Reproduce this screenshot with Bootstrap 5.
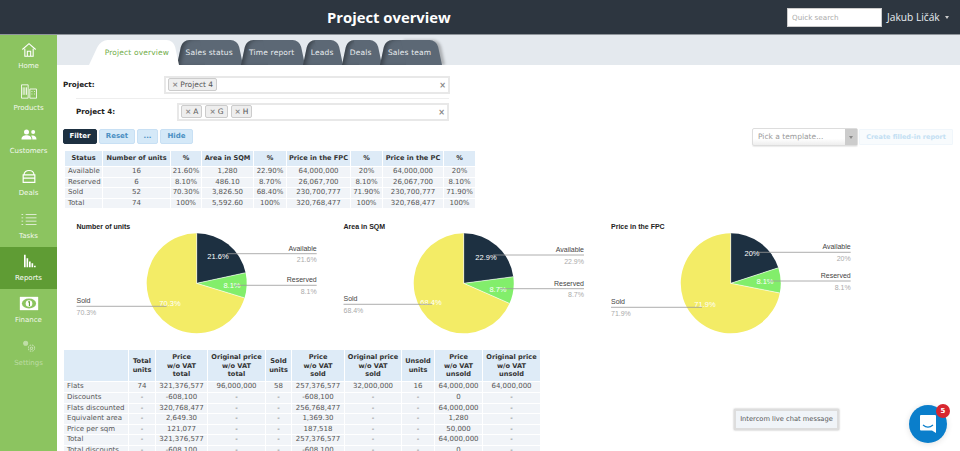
<!DOCTYPE html>
<html lang="en"><head><meta charset="utf-8"><title>Project overview</title>
<link href="https://cdn.jsdelivr.net/npm/bootstrap@5.3.0/dist/css/bootstrap.min.css" rel="stylesheet">
<style>
html,body{height:100%;overflow:hidden}
body{font-family:"DejaVu Sans",sans-serif;font-size:7px;color:#555;background:#fff}
.top-bar{height:35px;background:#2d3640;border-bottom:1px solid #8f959b;position:relative}
.top-title{font:700 14.800px/34px "Open Sans",sans-serif;color:#fff;position:absolute;left:327px;top:0}
.search-box{width:95px;height:19px;border:1px solid #ccc;background:#fff;font:7.200px "DejaVu Sans",sans-serif;padding:0 4px;color:#aaa;line-height:17px}
.user-name{font:10.200px "Open Sans",sans-serif;color:#e8eef2;width:58px;margin-left:5px}
.caret-mark{width:0;height:0;border:2px solid transparent;border-top:3px solid #ccc;border-bottom:0;margin-right:11px}
.side-nav{width:57px;background:#8cc460;flex:none;height:416px}
.side-item{height:42.400px;color:#f3f8ee;font:7px/9px "DejaVu Sans",sans-serif;padding-top:7px}
.side-item svg{height:15px;width:20px;display:block;margin-bottom:5px}
.side-item.on{background:#5f9c34;color:#fff}
.side-item.dim{opacity:.45}
.main-pane{flex:1;min-width:0}
.tab-band{height:30px;background:#e4e9ee;padding-left:39.500px;overflow:hidden}
.tab-shape{height:25px;padding:0 8.200px;font:7.500px/25px "DejaVu Sans",sans-serif;letter-spacing:.15px;color:#e9edf0;position:relative;z-index:1;white-space:nowrap}
.tab-shape::before,.tab-shape::after{content:"";position:absolute;top:0;bottom:0;width:60%;background:#5c6875;z-index:-1}
.tab-shape::before{left:0;transform-origin:bottom;transform:skewX(-12deg);border-top-left-radius:7px;box-shadow:inset 5px 0 4px -2px rgba(0,0,0,.35)}
.tab-shape::after{right:-2px;transform-origin:bottom;transform:skewX(12deg);border-top-right-radius:7px}
.tab-shape:last-child::after{box-shadow:3px 0 3px rgba(0,0,0,.25)}
.tab-shape.on{color:#72ad4a;z-index:2}
.tab-shape.on::before,.tab-shape.on::after{background:#fff;box-shadow:none}
.tab-shape.on::before{left:-8px;transform:skewX(-25deg);width:70%}
.filter-area{padding:11px 6px 0 6px;position:relative}
.field-row{display:flex;align-items:center;height:17px}
.field-name{font-weight:700;color:#222;font-size:7.200px;flex:none;padding-top:1px}
.name-wide{width:101px}
.name-narrow{width:101px;margin-left:13px}
.tag-box{width:286px;height:18px;border:2px solid #e8e8e8;display:flex;align-items:center;gap:3px;padding:0 2px;position:relative;flex:none}
.tag-box.short{width:272px}
.tag-item{border:1px solid #ccc;background:#eee;height:13px;border-radius:2px;line-height:11px;padding:0 3px;color:#555;font-size:7.500px}
.tag-item b{color:#888;font-weight:700;margin-right:2px}
.clear-x{position:absolute;right:2px;top:2px;color:#888;font-weight:700;font-size:8px;line-height:11px}
.row-rule{height:1px;background:#eee;margin:5px 0 4px 13px;width:373px}
.act-row{display:flex;gap:2px;margin-top:9px;height:15px}
.btn.act-btn{font:700 7px/13px "DejaVu Sans",sans-serif;padding:0;height:15px;border-radius:2px;border:1px solid #c8e0f4;background:#d5e9f8;color:#4a8fc2}
.btn.act-btn.dark{background:#1d3041;border-color:#1d3041;color:#fff;width:34px}
.w-reset{width:36px}.w-dots{width:21px}.w-hide{width:33px}
.right-tools{position:absolute;right:7px;top:63px;display:flex;gap:1px}
.tpl-pick{width:106px;height:18px;border:1px solid #ddd;border-radius:2px;background:linear-gradient(#fff 60%,#eee);color:#999;font-size:7.500px;line-height:16px;padding-left:5px;position:relative;box-shadow:0 1px 1px rgba(0,0,0,.08)}
.tpl-pick i{position:absolute;right:0;top:0;bottom:0;width:12px;background:#ccc;}
.tpl-pick i::after{content:"";position:absolute;left:4px;top:7px;border:2px solid transparent;border-top:3px solid #888;border-bottom:0}
.btn.fill-btn{font:700 6.500px/14px "DejaVu Sans",sans-serif;width:94px;height:16px;margin-top:1px;padding:0;border:1px solid #f0f6fb;background:#f8fbfd;color:#c3dff3;border-radius:1px;opacity:1}
.table.stat-grid{table-layout:fixed;margin:0;border-collapse:separate;border-spacing:1px;width:auto;--bs-table-bg:transparent}
.table.stat-grid>:not(caption)>*>*{padding:0;border:0;background:#f1f4f8;color:#555;font-size:7px;line-height:9.600px;text-align:center;box-shadow:none;white-space:nowrap}
.table.stat-grid>thead>tr>th{background:#deebf7;color:#333;font-weight:700;line-height:8.600px;vertical-align:middle;font-size:6.600px}
.table.stat-grid>tbody>tr>td:first-child{text-align:left;padding-left:3px}
.grid-one{margin-left:1px!important;margin-top:6px!important}
.grid-one>thead>tr>th{height:15px}
.g1a{width:37px}.g1b{width:67px}.g1c{width:30px}.g1d{width:51px}.g1e{width:32px}.g1f{width:63px}.g1g{width:31px}.g1h{width:60px}.g1i{width:31px}
.chart-row{display:flex;margin:0 0 0 -3px;height:130px;margin-top:6px}
.chart-row svg{width:267px;height:130px;flex:none}
.chart-row text{font-family:"Liberation Sans",sans-serif;font-size:7px}
.chart-head{font-weight:700;fill:#222}
.chart-name{fill:#444}
.chart-val{fill:#aaa}
.chart-in{fill:#fff;text-anchor:middle;font-size:7.500px!important}
.grid-two{margin-left:0!important;margin-top:4px!important}
.grid-two>thead>tr>th{height:31px}
.g2a{width:64px}.g2b{width:26px}.g2c{width:51px}.g2d{width:57px}.g2e{width:25px}.g2f{width:52px}.g2g{width:56px}.g2h{width:32px}.g2i{width:47px}.g2j{width:57px}
.chat-note{position:absolute;left:734px;top:409px;width:105px;height:21px;background:#f0f4f8;border:2px solid #ddd;box-shadow:0 0 2px rgba(0,0,0,.3);font:6.700px/17px "DejaVu Sans",sans-serif;color:#555;text-align:center}
.chat-btn{position:absolute;left:909px;top:405px;width:38px;height:38px;border-radius:50%;background:#0a7ecb;box-shadow:0 1px 6px rgba(0,0,0,.12)}
.chat-badge{position:absolute;left:936px;top:404px;width:14px;height:14px;border-radius:50%;background:#d8262f;color:#fff;font:700 7px/14px "DejaVu Sans",sans-serif;text-align:center}
</style></head>
<body>
<div class="top-bar d-flex align-items-center justify-content-end">
  <div class="top-title">Project overview</div>
  <div class="search-box">Quick search</div>
  <div class="user-name">Jakub Ličák</div>
  <div class="caret-mark"></div>
</div>
<div class="d-flex">
  <nav class="side-nav">
    <div class="side-item d-flex flex-column align-items-center"><svg viewBox="0 0 24 18" fill="none" stroke="#fff" stroke-width="1.300"><path d="M4 9 12 2l8 7M7 8v9h10V8M10 17v-6h4v6"/></svg>Home</div>
    <div class="side-item d-flex flex-column align-items-center"><svg viewBox="0 0 24 18" fill="none" stroke="#fff" stroke-width="1"><path d="M3 1h8v16H3zM13 6h8v11h-8zM5 4v9M7 4v9M9 4v9M15 9h1M18 9h1M15 12h1M18 12h1"/></svg>Products</div>
    <div class="side-item d-flex flex-column align-items-center"><svg viewBox="0 0 24 18" fill="#fff"><circle cx="9" cy="6" r="3"/><circle cx="17" cy="6" r="2.400"/><path d="M3 15c0-4 3-5 6-5s6 1 6 5zM16 15c0-2-.5-3.500-1.500-4.500 3-.8 6.500 0 6.500 4.500z"/></svg>Customers</div>
    <div class="side-item d-flex flex-column align-items-center"><svg viewBox="0 0 24 18" fill="none" stroke="#fff" stroke-width="1.400"><path d="M6 7c0-7 12-7 12 0M5 7h14v4H5zM5 11h14v5H5z"/></svg>Deals</div>
    <div class="side-item d-flex flex-column align-items-center"><svg viewBox="0 0 24 18" fill="none" stroke="#dcebcf" stroke-width="1.200"><path d="M8 3h13M8 7h13M8 11h13M8 15h13M3 3h2M3 7h2M3 11h2M3 15h2"/></svg>Tasks</div>
    <div class="side-item on d-flex flex-column align-items-center"><svg viewBox="0 0 24 18" fill="#fff"><path d="M6 1h2v15H6zM9 5h2v11H9zM12 9h2v7h-2zM15 11h2v5h-2zM18 14h2v2h-2z"/></svg>Reports</div>
    <div class="side-item d-flex flex-column align-items-center"><svg viewBox="0 0 24 18"><path fill="#fff" d="M1 1h22v16H1z"/><ellipse cx="12" cy="9" rx="8.500" ry="6" fill="#8cc460"/><circle cx="12" cy="9" r="4" fill="#fff"/><path d="M11 7h1.500v5" fill="none" stroke="#5f9c34" stroke-width="1.300"/></svg>Finance</div>
    <div class="side-item dim d-flex flex-column align-items-center"><svg viewBox="0 0 24 18" fill="none" stroke="#fff" stroke-width="1.300"><circle cx="8" cy="5" r="2.400" fill="#fff"/><circle cx="15" cy="11" r="3.800" stroke-dasharray="2 1"/><circle cx="15" cy="11" r="1.500"/></svg>Settings</div>
  </nav>
  <main class="main-pane">
    <div class="tab-band d-flex align-items-end">
      <div class="tab-shape on">Project overview</div>
      <div class="tab-shape">Sales status</div>
      <div class="tab-shape">Time report</div>
      <div class="tab-shape">Leads</div>
      <div class="tab-shape">Deals</div>
      <div class="tab-shape">Sales team</div>
    </div>
    <div class="filter-area">
      <div class="field-row"><span class="field-name name-wide">Project:</span>
        <div class="tag-box"><span class="tag-item"><b>×</b>Project 4</span><span class="clear-x">×</span></div></div>
      <div class="row-rule"></div>
      <div class="field-row"><span class="field-name name-narrow">Project 4:</span>
        <div class="tag-box short"><span class="tag-item"><b>×</b>A</span><span class="tag-item"><b>×</b>G</span><span class="tag-item"><b>×</b>H</span><span class="clear-x">×</span></div></div>
      <div class="act-row">
        <button class="btn act-btn dark">Filter</button><button class="btn act-btn w-reset">Reset</button><button class="btn act-btn w-dots">...</button><button class="btn act-btn w-hide">Hide</button>
      </div>
      <div class="right-tools"><div class="tpl-pick">Pick a template...<i></i></div><button class="btn fill-btn">Create filled-in report</button></div>

      <table class="table stat-grid grid-one">
        <colgroup><col class="g1a"><col class="g1b"><col class="g1c"><col class="g1d"><col class="g1e"><col class="g1f"><col class="g1g"><col class="g1h"><col class="g1i"></colgroup>
        <thead><tr><th>Status</th><th>Number of units</th><th>%</th><th>Area in SQM</th><th>%</th><th>Price in the FPC</th><th>%</th><th>Price in the PC</th><th>%</th></tr></thead>
        <tbody>
        <tr><td>Available</td><td>16</td><td>21.60%</td><td>1,280</td><td>22.90%</td><td>64,000,000</td><td>20%</td><td>64,000,000</td><td>20%</td></tr>
        <tr><td>Reserved</td><td>6</td><td>8.10%</td><td>486.10</td><td>8.70%</td><td>26,067,700</td><td>8.10%</td><td>26,067,700</td><td>8.10%</td></tr>
        <tr><td>Sold</td><td>52</td><td>70.30%</td><td>3,826.50</td><td>68.40%</td><td>230,700,777</td><td>71.90%</td><td>230,700,777</td><td>71.90%</td></tr>
        <tr><td>Total</td><td>74</td><td>100%</td><td>5,592.60</td><td>100%</td><td>320,768,477</td><td>100%</td><td>320,768,477</td><td>100%</td></tr>
        </tbody>
      </table>

      <div class="chart-row">
        <svg viewBox="0 0 267 130">
          <text class="chart-head" x="16.500" y="14">Number of units</text>
          <path d="M136.700 68.300V18.300A50 50 0 0 1 185.600 57.700Z" fill="#1d3041"/>
          <path d="M136.700 68.300 185.600 57.700A50 50 0 0 1 184.500 82.900Z" fill="#82ee6b"/>
          <path d="M136.700 68.300 184.500 82.900A50 50 0 1 1 136.700 18.300Z" fill="#f3ec66"/>
          <path d="M136.700 68.300 185.600 57.700M136.700 68.300 184.500 82.900M136.700 68.300V18.300" stroke="#fff" stroke-width=".6"/>
          <text class="chart-in" x="158" y="44.300">21.6%</text><text class="chart-in" x="172" y="72.500">8.1%</text><text class="chart-in" x="110" y="90.500">70.3%</text>
          <path d="M167 38.700H256.700M175 70.300H256.700M16.500 91.300H106.700" stroke="#999" stroke-width=".8"/>
          <text class="chart-name" x="256.700" y="35.500" text-anchor="end">Available</text><text class="chart-val" x="256.700" y="47" text-anchor="end">21.6%</text>
          <text class="chart-name" x="256.700" y="67" text-anchor="end">Reserved</text><text class="chart-val" x="256.700" y="79" text-anchor="end">8.1%</text>
          <text class="chart-name" x="16.500" y="88">Sold</text><text class="chart-val" x="16.500" y="99.500">70.3%</text>
        </svg>
        <svg viewBox="0 0 267 130">
          <text class="chart-head" x="16.500" y="14">Area in SQM</text>
          <path d="M136.700 68.300V18.300A50 50 0 0 1 186.300 61.700Z" fill="#1d3041"/>
          <path d="M136.700 68.300 186.300 61.700A50 50 0 0 1 182.500 88.400Z" fill="#82ee6b"/>
          <path d="M136.700 68.300 182.500 88.400A50 50 0 1 1 136.700 18.300Z" fill="#f3ec66"/>
          <path d="M136.700 68.300 186.300 61.700M136.700 68.300 182.500 88.400M136.700 68.300V18.300" stroke="#fff" stroke-width=".6"/>
          <text class="chart-in" x="159" y="45">22.9%</text><text class="chart-in" x="171" y="76.500">8.7%</text><text class="chart-in" x="104" y="89.500">68.4%</text>
          <path d="M166 40H257M173 73.700H257M16.500 89.300H105" stroke="#999" stroke-width=".8"/>
          <text class="chart-name" x="257" y="37" text-anchor="end">Available</text><text class="chart-val" x="257" y="48.500" text-anchor="end">22.9%</text>
          <text class="chart-name" x="257" y="70.500" text-anchor="end">Reserved</text><text class="chart-val" x="257" y="82" text-anchor="end">8.7%</text>
          <text class="chart-name" x="16.500" y="86">Sold</text><text class="chart-val" x="16.500" y="97.500">68.4%</text>
        </svg>
        <svg viewBox="0 0 267 130">
          <text class="chart-head" x="17" y="14">Price in the FPC</text>
          <path d="M136.700 68.300V18.300A50 50 0 0 1 184.300 52.800Z" fill="#1d3041"/>
          <path d="M136.700 68.300 184.300 52.800A50 50 0 0 1 185.800 78Z" fill="#82ee6b"/>
          <path d="M136.700 68.300 185.800 78A50 50 0 1 1 136.700 18.300Z" fill="#f3ec66"/>
          <path d="M136.700 68.300 184.300 52.800M136.700 68.300 185.800 78M136.700 68.300V18.300" stroke="#fff" stroke-width=".6"/>
          <text class="chart-in" x="158" y="40.500">20%</text><text class="chart-in" x="171" y="68.500">8.1%</text><text class="chart-in" x="111" y="92">71.9%</text>
          <path d="M163 37.300H256.700M175 66H256.700M17 92.300H108" stroke="#999" stroke-width=".8"/>
          <text class="chart-name" x="256.700" y="34" text-anchor="end">Available</text><text class="chart-val" x="256.700" y="46" text-anchor="end">20%</text>
          <text class="chart-name" x="256.700" y="63" text-anchor="end">Reserved</text><text class="chart-val" x="256.700" y="75" text-anchor="end">8.1%</text>
          <text class="chart-name" x="17" y="89">Sold</text><text class="chart-val" x="17" y="100.500">71.9%</text>
        </svg>
      </div>

      <table class="table stat-grid grid-two">
        <colgroup><col class="g2a"><col class="g2b"><col class="g2c"><col class="g2d"><col class="g2e"><col class="g2f"><col class="g2g"><col class="g2h"><col class="g2i"><col class="g2j"></colgroup>
        <thead><tr><th></th><th>Total<br>units</th><th>Price<br>w/o VAT<br>total</th><th>Original price<br>w/o VAT<br>total</th><th>Sold<br>units</th><th>Price<br>w/o VAT<br>sold</th><th>Original price<br>w/o VAT<br>sold</th><th>Unsold<br>units</th><th>Price<br>w/o VAT<br>unsold</th><th>Original price<br>w/o VAT<br>unsold</th></tr></thead>
        <tbody>
        <tr><td>Flats</td><td>74</td><td>321,376,577</td><td>96,000,000</td><td>58</td><td>257,376,577</td><td>32,000,000</td><td>16</td><td>64,000,000</td><td>64,000,000</td></tr>
        <tr><td>Discounts</td><td>-</td><td>-608,100</td><td>-</td><td>-</td><td>-608,100</td><td>-</td><td>-</td><td>0</td><td>-</td></tr>
        <tr><td>Flats discounted</td><td>-</td><td>320,768,477</td><td>-</td><td>-</td><td>256,768,477</td><td>-</td><td>-</td><td>64,000,000</td><td>-</td></tr>
        <tr><td>Equivalent area</td><td>-</td><td>2,649.30</td><td>-</td><td>-</td><td>1,369.30</td><td>-</td><td>-</td><td>1,280</td><td>-</td></tr>
        <tr><td>Price per sqm</td><td>-</td><td>121,077</td><td>-</td><td>-</td><td>187,518</td><td>-</td><td>-</td><td>50,000</td><td>-</td></tr>
        <tr><td>Total</td><td>-</td><td>321,376,577</td><td>-</td><td>-</td><td>257,376,577</td><td>-</td><td>-</td><td>64,000,000</td><td>-</td></tr>
        <tr><td>Total discounts</td><td>-</td><td>-608,100</td><td>-</td><td>-</td><td>-608,100</td><td>-</td><td>-</td><td>0</td><td>-</td></tr>
        </tbody>
      </table>
    </div>
  </main>
</div>
<div class="chat-note">Intercom live chat message</div>
<div class="chat-btn d-flex align-items-center justify-content-center"><svg width="18" height="20" viewBox="0 0 18 20"><path fill="#fff" d="M2 1h14a1 1 0 0 1 1 1v17l-4-2.500H2a1 1 0 0 1-1-1V2a1 1 0 0 1 1-1z"/><path d="M4 11c3 2.500 7 2.500 10 0" fill="none" stroke="#0a7ecb" stroke-width="1.200"/></svg></div>
<div class="chat-badge">5</div>
</body></html>
